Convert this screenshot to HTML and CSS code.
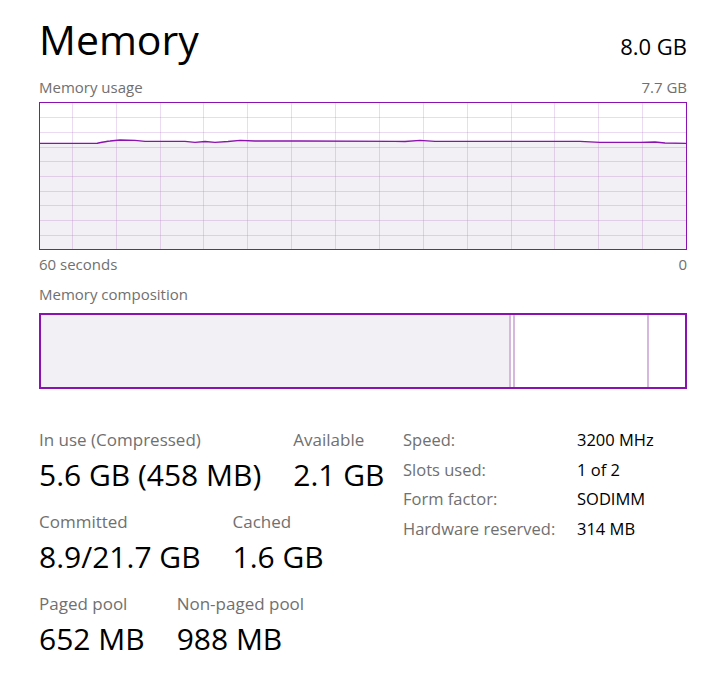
FILE: index.html
```html
<!DOCTYPE html>
<html lang="en">
<head>
  <meta charset="UTF-8">
  <meta name="viewport" content="width=device-width, initial-scale=1.0">
  <title>Memory</title>
  <link rel="stylesheet" href="styles.css">
</head>
<body>
  <div class="page">
    <div class="header">
      <div class="title">Memory</div>
      <div class="total">8.0 GB</div>
    </div>

    <div class="caption-row usage-caption">
      <span>Memory usage</span>
      <span>7.7 GB</span>
    </div>

    <div class="graph">
      <svg width="646" height="146" viewBox="0 0 646 146">
        <path class="area" d="M0 40.3 L57 40.3 C63 39 66 38.3 70 38 L80 37 L95 37.3 L105 38.3 L145 38.3 L155 39.3 L165 38.5 L175 39.3 L188 38.5 L200 37.3 L215 38 L260 38 L355 38.3 L365 38.5 L380 37.3 L395 38.3 L540 38.3 L560 39.3 L600 39.3 L615 39 L625 40 L646 40.3 L646 146 L0 146 Z"/>
        <g class="grid">
          <line x1="32.5" y1="0" x2="32.5" y2="146"/>
          <line x1="76.5" y1="0" x2="76.5" y2="146"/>
          <line x1="120.5" y1="0" x2="120.5" y2="146"/>
          <line x1="163.5" y1="0" x2="163.5" y2="146"/>
          <line x1="207.5" y1="0" x2="207.5" y2="146"/>
          <line x1="251.5" y1="0" x2="251.5" y2="146"/>
          <line x1="295.5" y1="0" x2="295.5" y2="146"/>
          <line x1="339.5" y1="0" x2="339.5" y2="146"/>
          <line x1="383.5" y1="0" x2="383.5" y2="146"/>
          <line x1="427.5" y1="0" x2="427.5" y2="146"/>
          <line x1="471.5" y1="0" x2="471.5" y2="146"/>
          <line x1="514.5" y1="0" x2="514.5" y2="146"/>
          <line x1="558.5" y1="0" x2="558.5" y2="146"/>
          <line x1="602.5" y1="0" x2="602.5" y2="146"/>
          <line x1="0" y1="14.5" x2="646" y2="14.5"/>
          <line x1="0" y1="29.5" x2="646" y2="29.5"/>
          <line x1="0" y1="44.5" x2="646" y2="44.5"/>
          <line x1="0" y1="58.5" x2="646" y2="58.5"/>
          <line x1="0" y1="73.5" x2="646" y2="73.5"/>
          <line x1="0" y1="88.5" x2="646" y2="88.5"/>
          <line x1="0" y1="102.5" x2="646" y2="102.5"/>
          <line x1="0" y1="117.5" x2="646" y2="117.5"/>
          <line x1="0" y1="132.5" x2="646" y2="132.5"/>
        </g>
        <path class="trace" d="M0 40.3 L57 40.3 C63 39 66 38.3 70 38 L80 37 L95 37.3 L105 38.3 L145 38.3 L155 39.3 L165 38.5 L175 39.3 L188 38.5 L200 37.3 L215 38 L260 38 L355 38.3 L365 38.5 L380 37.3 L395 38.3 L540 38.3 L560 39.3 L600 39.3 L615 39 L625 40 L646 40.3"/>
      </svg>
    </div>

    <div class="caption-row axis-caption">
      <span>60 seconds</span>
      <span>0</span>
    </div>

    <div class="caption-row composition-caption">
      <span>Memory composition</span>
    </div>

    <div class="composition">
      <div class="seg in-use"></div>
      <div class="seg modified"></div>
      <div class="seg standby"></div>
      <div class="seg free"></div>
    </div>

    <div class="stats">
      <div class="stats-main">
        <div class="stat-row">
          <div class="stat">
            <div class="stat-label">In use (Compressed)</div>
            <div class="stat-value">5.6 GB (458 MB)</div>
          </div>
          <div class="stat">
            <div class="stat-label">Available</div>
            <div class="stat-value">2.1 GB</div>
          </div>
        </div>
        <div class="stat-row">
          <div class="stat">
            <div class="stat-label">Committed</div>
            <div class="stat-value">8.9/21.7 GB</div>
          </div>
          <div class="stat">
            <div class="stat-label">Cached</div>
            <div class="stat-value">1.6 GB</div>
          </div>
        </div>
        <div class="stat-row">
          <div class="stat">
            <div class="stat-label">Paged pool</div>
            <div class="stat-value">652 MB</div>
          </div>
          <div class="stat">
            <div class="stat-label">Non-paged pool</div>
            <div class="stat-value">988 MB</div>
          </div>
        </div>
      </div>

      <div class="details">
        <div class="detail-label">Speed:</div>
        <div class="detail-value">3200 MHz</div>
        <div class="detail-label">Slots used:</div>
        <div class="detail-value">1 of 2</div>
        <div class="detail-label">Form factor:</div>
        <div class="detail-value">SODIMM</div>
        <div class="detail-label">Hardware reserved:</div>
        <div class="detail-value">314 MB</div>
      </div>
    </div>
  </div>
</body>
</html>
```

FILE: styles.css
```css
body {
  margin: 0;
  padding: 0;
  background: #fff;
  font-family: "Open Sans", "Noto Sans", sans-serif;
  color: #000;
}

.page {
  width: 648px;
  padding: 15px 26px 0 39px;
}

.header {
  display: flex;
  justify-content: space-between;
  align-items: baseline;
  height: 48px;
}

.title {
  font-size: 41px;
  line-height: 48px;
}

.total {
  font-size: 22px;
  line-height: 48px;
}

.caption-row {
  display: flex;
  justify-content: space-between;
  font-size: 15px;
  line-height: 20px;
  color: #707070;
}

.usage-caption {
  margin-top: 14px;
}

.graph {
  margin-top: 5px;
  width: 646px;
  height: 146px;
  border: 1px solid #8b12ae;
}

.graph svg {
  display: block;
}

.area {
  fill: #f2f0f4;
}

.grid line {
  stroke: #b060c8;
  stroke-opacity: 0.24;
  stroke-width: 1;
}

.trace {
  fill: none;
  stroke: #8b12ae;
  stroke-width: 1.3;
}

.axis-caption {
  margin-top: 4px;
}

.composition-caption {
  margin-top: 10px;
}

.composition {
  margin-top: 9px;
  width: 644px;
  height: 72px;
  border: 2px solid #8b12ae;
  display: flex;
}

.seg {
  box-sizing: border-box;
  border-right: 2px solid #d6b8de;
}

.in-use {
  width: 470px;
  background: #f2f0f4;
}

.modified {
  width: 4px;
}

.standby {
  width: 134px;
}

.free {
  flex: 1;
  border-right: none;
}

.stats {
  margin-top: 40px;
  display: flex;
}

.stats-main {
  width: 364px;
  flex: none;
  display: flex;
  flex-direction: column;
  gap: 18.5px;
}

.stat-row {
  display: flex;
  gap: 32px;
}

.stat {
  display: flex;
  flex-direction: column;
  gap: 5.5px;
}

.stat-label {
  font-size: 17px;
  line-height: 22px;
  color: #707070;
  white-space: nowrap;
}

.stat-value {
  font-size: 30px;
  line-height: 36px;
  white-space: nowrap;
}

.details {
  display: grid;
  grid-template-columns: 174px auto;
  row-gap: 7.5px;
  align-content: start;
  font-size: 16.5px;
  line-height: 22px;
}

.detail-label {
  color: #707070;
  white-space: nowrap;
}

.detail-value {
  white-space: nowrap;
}
```
